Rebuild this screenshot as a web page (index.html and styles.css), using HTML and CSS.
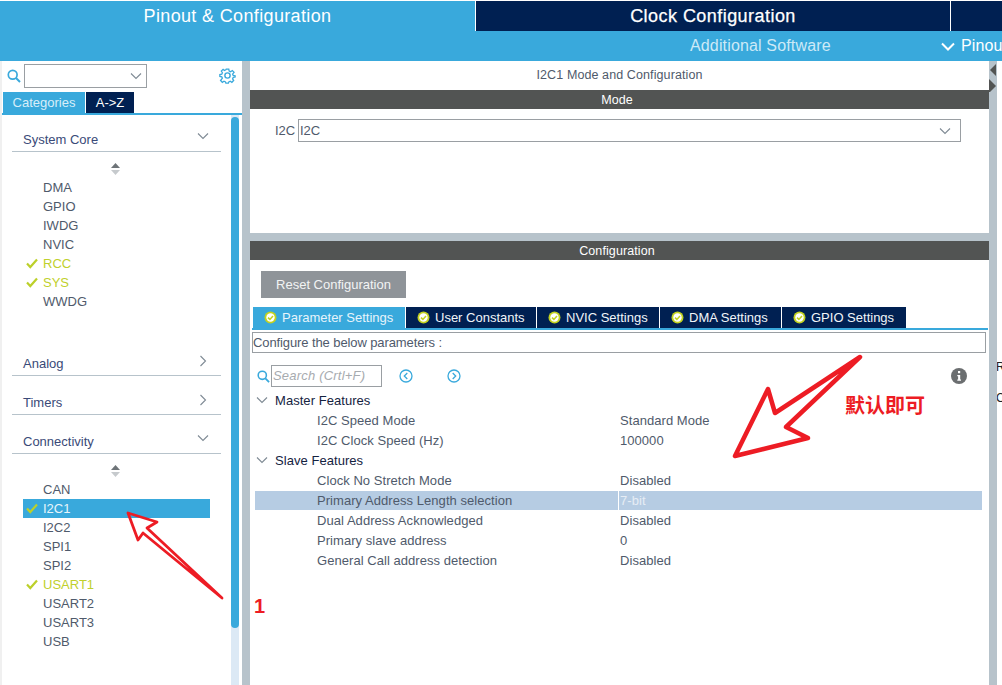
FILE: index.html
```html
<!DOCTYPE html>
<html lang="en">
<head>
<meta charset="utf-8">
<title>I2C1 Mode and Configuration</title>
<link rel="stylesheet" href="styles.css">
</head>
<body>
<svg width="0" height="0" class="defs">
  <symbol id="chev-d" viewBox="0 0 12 8"><path d="M1 1.5 6 6.5 11 1.5" fill="none" stroke="#7f8a94" stroke-width="1.1"/></symbol>
  <symbol id="chev-r" viewBox="0 0 8 12"><path d="M1.5 1 6.5 6 1.5 11" fill="none" stroke="#7f8a94" stroke-width="1.1"/></symbol>
  <symbol id="search" viewBox="0 0 14 14"><circle cx="5.7" cy="5.7" r="4.4" fill="none" stroke="#39a9dc" stroke-width="1.7"/><path d="M9 9 13 13" stroke="#39a9dc" stroke-width="2"/></symbol>
  <symbol id="ok" viewBox="0 0 13 13"><circle cx="6.5" cy="6.5" r="6" fill="#c3d21f"/><circle cx="6.5" cy="6.5" r="4.2" fill="#fff"/><path d="M4 6.6 5.9 8.4 9 4.9" fill="none" stroke="#c3d21f" stroke-width="1.5"/></symbol>
  <symbol id="check" viewBox="0 0 12 11"><path d="M1 5.5 4.3 9 11 1.5" fill="none" stroke="#bcd02a" stroke-width="2.2"/></symbol>
  <symbol id="sort" viewBox="0 0 9 12"><path d="M4.500 0 9 5H0z" fill="#6e7478"/><path d="M0 7H9L4.500 12z" fill="#c6cacd"/></symbol>
</svg>

<header class="top">
  <div class="main-tabs">
    <div class="main-tab tab-pinout">Pinout &amp; Configuration</div>
    <div class="main-tab tab-clock">Clock Configuration</div>
    <div class="main-tab tab-rest"></div>
  </div>
  <div class="sub-tabs">
    <span class="additional">Additional Software</span>
    <svg class="sub-chev" width="14" height="9" viewBox="0 0 14 9"><path d="M1 1.500 7 7.500 13 1.500" fill="none" stroke="#fff" stroke-width="2"/></svg>
    <span class="pinout-view">Pinout view</span>
  </div>
</header>

<div class="body">
  <aside class="side">
    <div class="side-content">
      <div class="side-search">
        <svg class="s-icon" width="14" height="14"><use href="#search"/></svg>
        <div class="combo"><svg width="12" height="8"><use href="#chev-d"/></svg></div>
        <svg class="gear" width="17" height="17" viewBox="0 0 24 24" fill="none" stroke="#39a9dc" stroke-width="2"><circle cx="12" cy="12" r="3.700"/><path d="M10 2h4l.6 3 2.300 1 2.600-1.700 2.800 2.800L20 9.700l1 2.300 3 .6v-1 2.800l-3 .6-1 2.300 1.700 2.600-2.800 2.800-2.600-1.700-2.300 1-.6 2h-4l-.6-2-2.300-1-2.600 1.700-2.800-2.800L4 16.300 3 14l-3-.6v-2.800l3-.6 1-2.300-1.700-2.600 2.800-2.800L7.100 4l2.300-1z" transform="translate(1.200 1.200) scale(.9)"/></svg>
      </div>
      <div class="side-tabs">
        <div class="side-tab active">Categories</div>
        <div class="side-tab">A-&gt;Z</div>
      </div>
      <div class="cat-area">
        <div class="cats">
          <section class="cat cat-first">
            <div class="cat-head"><span>System Core</span><svg width="12" height="8"><use href="#chev-d"/></svg></div>
            <div class="sort"><svg width="9" height="12"><use href="#sort"/></svg></div>
            <ul class="items">
              <li>DMA</li><li>GPIO</li><li>IWDG</li><li>NVIC</li>
              <li class="on"><svg width="12" height="11"><use href="#check"/></svg>RCC</li>
              <li class="on"><svg width="12" height="11"><use href="#check"/></svg>SYS</li>
              <li>WWDG</li>
            </ul>
          </section>
          <section class="cat cat-analog">
            <div class="cat-head"><span>Analog</span><svg class="chev-right" width="8" height="12"><use href="#chev-r"/></svg></div>
          </section>
          <section class="cat">
            <div class="cat-head"><span>Timers</span><svg class="chev-right" width="8" height="12"><use href="#chev-r"/></svg></div>
          </section>
          <section class="cat">
            <div class="cat-head"><span>Connectivity</span><svg width="12" height="8"><use href="#chev-d"/></svg></div>
            <div class="sort"><svg width="9" height="12"><use href="#sort"/></svg></div>
            <ul class="items">
              <li>CAN</li>
              <li class="sel"><svg width="12" height="11"><use href="#check"/></svg>I2C1</li>
              <li>I2C2</li><li>SPI1</li><li>SPI2</li>
              <li class="on"><svg width="12" height="11"><use href="#check"/></svg>USART1</li>
              <li>USART2</li><li>USART3</li><li>USB</li>
            </ul>
          </section>
        </div>
        <div class="scroll"><div class="thumb"></div></div>
      </div>
    </div>
  </aside>

  <main class="center">
    <section class="mode">
      <div class="panel-title">I2C1 Mode and Configuration</div>
      <div class="bar">Mode</div>
      <div class="mode-row">
        <span class="mode-label">I2C</span>
        <div class="mode-select"><span>I2C</span><svg width="12" height="8"><use href="#chev-d"/></svg></div>
      </div>
    </section>
    <section class="config">
      <div class="bar">Configuration</div>
      <button class="reset">Reset Configuration</button>
      <div class="cfg-tabs">
        <div class="cfg-tab active t1"><svg width="13" height="13"><use href="#ok"/></svg>Parameter Settings</div>
        <div class="cfg-tab t2"><svg width="13" height="13"><use href="#ok"/></svg>User Constants</div>
        <div class="cfg-tab t3"><svg width="13" height="13"><use href="#ok"/></svg>NVIC Settings</div>
        <div class="cfg-tab t4"><svg width="13" height="13"><use href="#ok"/></svg>DMA Settings</div>
        <div class="cfg-tab t5"><svg width="13" height="13"><use href="#ok"/></svg>GPIO Settings</div>
      </div>
      <div class="hint">Configure the below parameters :</div>
      <div class="tools">
        <svg class="t-search" width="13" height="13"><use href="#search"/></svg>
        <div class="t-input">Search (Crtl+F)</div>
        <svg class="nav nav-prev" width="14" height="14" viewBox="0 0 14 14"><circle cx="7" cy="7" r="6" fill="none" stroke="#39a9dc" stroke-width="1.300"/><path d="M8.300 4 5.300 7 8.300 10" fill="none" stroke="#39a9dc" stroke-width="1.300"/></svg>
        <svg class="nav nav-next" width="14" height="14" viewBox="0 0 14 14"><circle cx="7" cy="7" r="6" fill="none" stroke="#39a9dc" stroke-width="1.300"/><path d="M5.700 4 8.700 7 5.700 10" fill="none" stroke="#39a9dc" stroke-width="1.300"/></svg>
        <svg class="info" width="16" height="16" viewBox="0 0 16 16"><circle cx="8" cy="8" r="8" fill="#6b6e70"/><rect x="7" y="3" width="2.200" height="2.200" fill="#fff"/><path d="M6.300 7H9.200V11.500H10V12.800H6.300V11.500H7.100V8.300H6.300z" fill="#fff"/></svg>
      </div>
      <div class="tree">
        <div class="group"><svg width="12" height="8"><use href="#chev-d"/></svg>Master Features</div>
        <div class="row"><span class="k">I2C Speed Mode</span><span class="v">Standard Mode</span></div>
        <div class="row"><span class="k">I2C Clock Speed (Hz)</span><span class="v">100000</span></div>
        <div class="group"><svg width="12" height="8"><use href="#chev-d"/></svg>Slave Features</div>
        <div class="row"><span class="k">Clock No Stretch Mode</span><span class="v">Disabled</span></div>
        <div class="row hl"><span class="k">Primary Address Length selection</span><span class="v">7-bit</span></div>
        <div class="row"><span class="k">Dual Address Acknowledged</span><span class="v">Disabled</span></div>
        <div class="row"><span class="k">Primary slave address</span><span class="v">0</span></div>
        <div class="row"><span class="k">General Call address detection</span><span class="v">Disabled</span></div>
      </div>
    </section>
  </main>

  <div class="right-gutter">
    <svg width="8" height="30" viewBox="0 0 8 30"><path d="M7 2V14L1 8z" fill="#525453"/><path d="M0 17V31L7 24z" fill="#525453"/></svg>
  </div>
  <div class="right-edge"><span class="e1">R</span><span class="e2">C</span></div>
</div>

<svg class="marks" width="1002" height="685" viewBox="0 0 1002 685">
  <path d="M860 357 775 413 768 389 735 456 808 438 786 427z" fill="none" stroke="#ed1c24" stroke-width="4.500" stroke-linejoin="round"/>
  <path d="M222 598 147 528 157 522 128 513 138 540 143 533z" fill="none" stroke="#ed1c24" stroke-width="2.800" stroke-linejoin="round"/>
</svg>
<div class="note note-1">1</div>
<div class="note note-2">默认即可</div>
</body>
</html>
```

FILE: styles.css
```css
* { box-sizing: border-box; }
html, body { margin: 0; padding: 0; }
body {
  position: relative;
  width: 1002px;
  height: 685px;
  overflow: hidden;
  background: #fff;
  font-family: "Liberation Sans", Arial, sans-serif;
  font-size: 13px;
  color: #4f5a6b;
}
.defs { position: absolute; }
svg { display: block; flex: none; }

.top { padding-top: 1px; background: #fff; }
.main-tabs { display: flex; height: 30px; gap: 1px; }
.main-tab {
  display: flex; align-items: center; justify-content: center;
  font-size: 18px; letter-spacing: .35px; color: #fff;
  background: #002052;
}
.tab-pinout { width: 475px; background: #39a9dc; }
.tab-clock { width: 474px; -webkit-text-stroke: .25px #fff; letter-spacing: .45px; }
.tab-rest { flex: 1; }
.sub-tabs {
  display: flex; align-items: center; height: 30px;
  background: #39a9dc; font-size: 16px; letter-spacing: .15px; white-space: nowrap;
  overflow: hidden;
}
.additional { flex: none; margin-left: 690px; width: 251px; color: #cdeaf7; }
.sub-chev { margin-right: 6px; }
.pinout-view { flex: none; color: #fff; }

.body { display: flex; height: 624px; }

.side { width: 250px; background: #b7c3cb; padding-right: 8px; }
.side-content { height: 100%; background: #fff; border-left: 2px solid #f0f0f0; }
.side-search { display: flex; align-items: center; height: 27px; padding-top: 2px; }
.s-icon { margin: 0 0 0 5px; }
.combo {
  width: 123px; height: 24px; margin-left: 3px;
  display: flex; align-items: center; justify-content: flex-end; padding-right: 4px;
  border: 1px solid #9a9fa3;
}
.gear { margin-left: 72px; }
.side-tabs {
  display: flex; gap: 1px; height: 27px; padding-top: 4px; padding-left: 1px;
  border-bottom: 2px solid #39a9dc;
}
.side-tab {
  display: flex; align-items: center; justify-content: center;
  width: 48px; height: 21px; background: #002052; color: #fff;
}
.side-tab.active { width: 82px; background: #39a9dc; color: #d7eef9; }

.cat-area { display: flex; height: 570px; }
.cats { width: 229px; padding: 0 0 0 10px; }
.cat-head {
  display: flex; align-items: flex-end; justify-content: space-between;
  width: 209px; height: 39px; padding: 0 12px 4px 11px;
  border-bottom: 1px solid #b7c3cb;
  color: #3a4a78; line-height: 15px;
}
.cat-head svg { margin-bottom: 7px; }
.cat-head .chev-right { margin-right: 2px; margin-bottom: 4px; }
.cat-first .cat-head { height: 37px; }
.sort { display: flex; justify-content: center; width: 207px; height: 26px; padding: 11px 0 0; }
.items { list-style: none; margin: 0; padding: 0 0 0 11px; width: 198px; }
.items li {
  display: flex; align-items: center; height: 19px; padding-left: 20px; position: relative;
}
.items li svg { position: absolute; left: 3px; top: 4px; }
.items li.on { color: #bfd02c; }
.items li.sel { background: #39a9dc; color: #e8f5fb; }
.cat-analog { margin-top: 26px; }
.scroll { width: 8px; background: #dce9f5; }
.thumb { height: 511px; margin-top: 2px; background: #39a9dc; border-radius: 4px; }

.center { width: 739px; display: flex; flex-direction: column; background: #b7c3cb; }
.mode { height: 172px; background: #fff; margin-bottom: 8px; }
.panel-title { height: 29px; line-height: 29px; text-align: center; font-size: 12.5px; letter-spacing: .1px; }
.bar {
  height: 19px; line-height: 21px; text-align: center; padding-right: 5px;
  background: #525453; color: #fff; font-size: 12.5px; letter-spacing: .1px;
}
.mode-row { display: flex; align-items: center; margin-top: 10px; padding-left: 25px; }
.mode-label { width: 23px; }
.mode-select {
  display: flex; align-items: center; justify-content: space-between;
  width: 663px; height: 23px; padding: 0 9px 0 1px;
  border: 1px solid #9a9fa3;
}

.config { flex: 1; background: #fff; position: relative; }
.reset {
  display: block; width: 145px; height: 27px; margin: 11px 0 9px 11px; padding: 0;
  border: 0; background: #8f9499; color: #f2f3f4;
  font: inherit;
}
.cfg-tabs {
  display: flex; gap: 1px; height: 23px; margin-left: 2px; padding-left: 1px; width: 736px;
  border-bottom: 2px solid #39a9dc;
}
.cfg-tab {
  display: flex; align-items: center; height: 21px; padding-left: 11px;
  background: #002052; color: #f1f5f9; white-space: nowrap;
}
.cfg-tab svg { margin-right: 5px; }
.cfg-tab.active { background: #39a9dc; color: #e6f4fb; }
.t1 { width: 152px; }
.t2 { width: 130px; }
.t3 { width: 122px; }
.t4 { width: 121px; }
.t5 { width: 124px; }
.hint {
  height: 21px; line-height: 19px; width: 734px; margin: 2px 0 0 2px; padding-left: 0;
  border: 1px solid #9a9fa3; letter-spacing: -.1px;
}
.tools { display: flex; align-items: center; height: 22px; margin-top: 12px; padding-left: 7px; }
.t-search { margin-right: 1px; }
.t-input {
  width: 111px; height: 22px; line-height: 20px; padding-left: 1px; letter-spacing: .2px;
  border: 1px solid #9a9fa3; color: #a7abaf; font-style: italic; white-space: nowrap; overflow: hidden;
}
.nav-prev { margin-left: 17px; }
.nav-next { margin-left: 34px; }
.info { margin-left: 490px; }
.tree { margin-top: 3px; padding-left: 5px; letter-spacing: .05px; }
.group {
  display: flex; align-items: center; height: 20px; color: #15233f;
}
.group svg { margin: 0 7px 0 1px; }
.row { display: flex; align-items: center; height: 20px; width: 727px; }
.k { width: 363px; padding-left: 62px; white-space: nowrap; }
.v { padding-left: 2px; flex: 1; }
.row.hl { height: 19px; margin-top: 1px; background: #b6cce3; }
.row.hl .v { align-self: stretch; display: flex; align-items: center; color: #e6edf5; border-left: 1px solid #fff; padding-left: 1px; }

.right-gutter { width: 8px; background: #b7c3cb; padding-top: 1px; }
.right-edge { flex: 1; position: relative; overflow: hidden; color: #222; font-size: 12px; }
.e1, .e2 { display: block; margin-left: -1px; }
.e1 { margin-top: 299px; }
.e2 { margin-top: 17px; }

.marks { position: absolute; left: 0; top: 0; pointer-events: none; }
.note { position: absolute; color: #ed1c24; font-weight: bold; }
.note-1 { left: 254px; top: 594px; font-size: 20px; line-height: 24px; }
.note-2 { left: 845px; top: 393px; font-size: 20px; line-height: 24px; font-family: "Noto Sans CJK SC", sans-serif; }
```
